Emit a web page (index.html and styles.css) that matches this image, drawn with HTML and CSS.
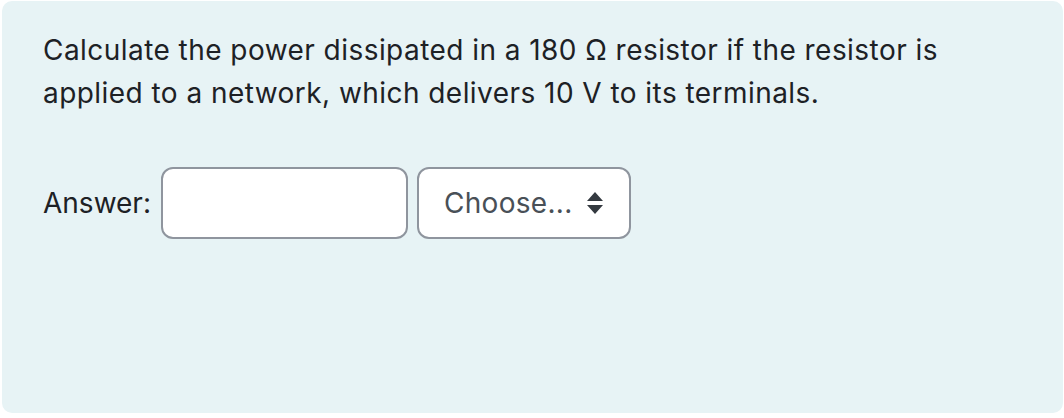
FILE: index.html
```html
<!DOCTYPE html>
<html lang="en">
<head>
	<meta charset="UTF-8">
	<title>Question</title>
	<link rel="stylesheet" href="styles.css">
</head>
<body>
	<div class="formulation">
		<p class="qtext">Calculate the power dissipated in a 180 Ω resistor if the resistor is applied to a network, which delivers 10 V to its terminals.</p>
		<div class="ablock">
			<label class="answer-label" for="ans">Answer:</label>
			<input type="text" id="ans" class="answer-input">
			<div class="unit-select">
				<span>Choose...</span>
				<svg class="arrows" width="16" height="22" viewBox="0 0 16 22"><path d="M8 0 L16 9 L0 9 Z M0 13 L16 13 L8 22 Z" fill="#343a40"/></svg>
			</div>
		</div>
	</div>
</body>
</html>
```

FILE: styles.css
```css
body,div,p,input,label{margin: 0;padding: 0}
body{background: #fff;font: 400 28px/1.5 "Inter", "Liberation Sans", sans-serif;color: #1d2125;}
.formulation{margin: 1px 1px 0 2px;height: 384px;background: #e7f3f5;border-radius: 10px;padding: 28px 41px 0 41px;}
.qtext{width: 960px;line-height: 43px;letter-spacing: 0.45px;}
.ablock{display: flex;align-items: center;margin-top: 52px;}
.answer-label{margin-right: 10px;}
.answer-input{box-sizing: border-box;width: 247px;height: 72px;border: 2px solid #8f959e;border-radius: 12px;background: #fff;margin-right: 9px;font: inherit;}
.unit-select{box-sizing: border-box;width: 214px;height: 72px;border: 2px solid #8f959e;border-radius: 12px;background: #fff;display: flex;align-items: center;justify-content: space-between;padding: 0 26px 0 25px;color: #495057;letter-spacing: 0.3px;}
.arrows{display: block;}
```
